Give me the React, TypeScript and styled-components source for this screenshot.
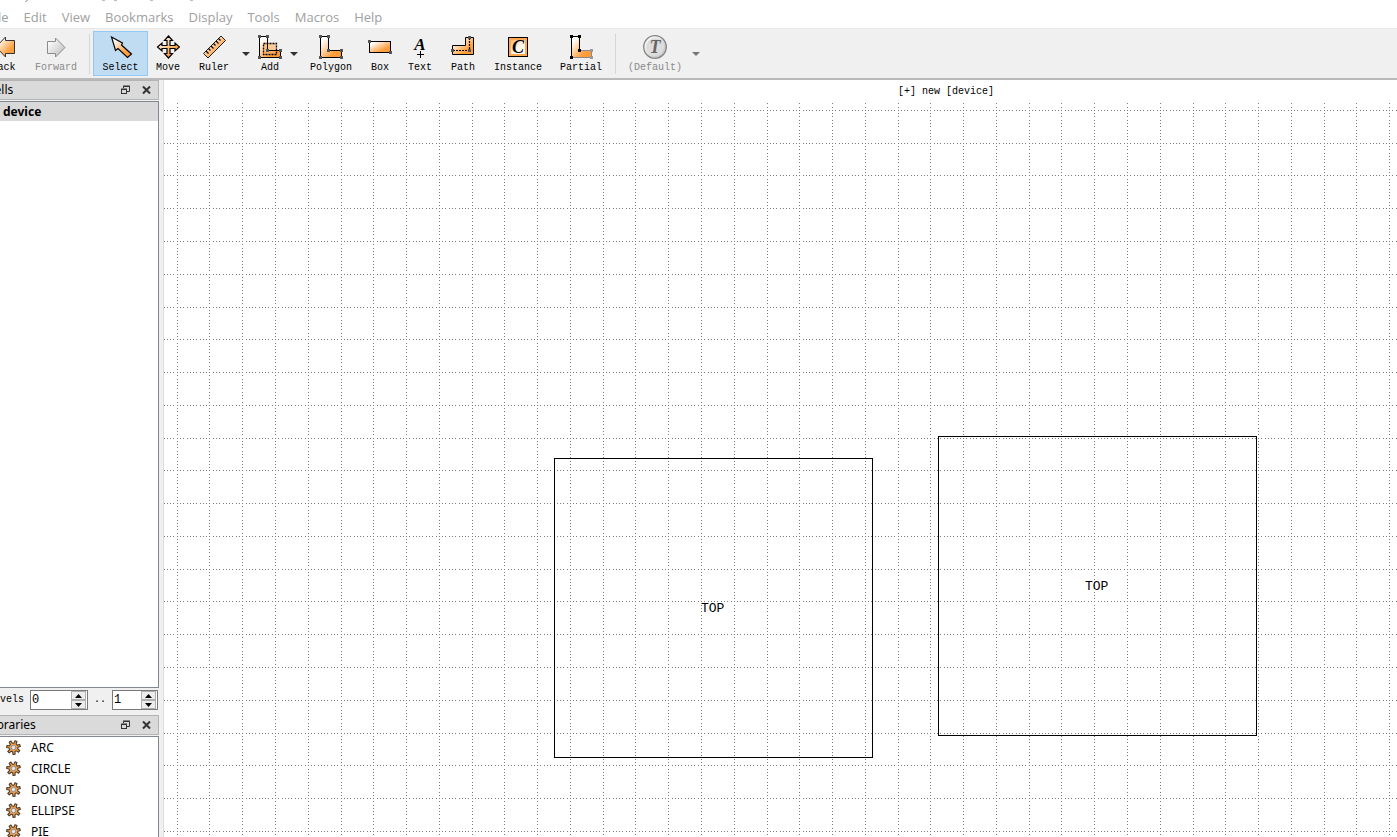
import React from "react";
import styled, { createGlobalStyle, css } from "styled-components";

const GlobalStyle = createGlobalStyle`
  * { box-sizing: border-box; }
  body { margin: 0; overflow: hidden; background: #fff; }
  button, input { font: inherit; color: inherit; margin: 0; }
`;

const mono = `"Liberation Mono", monospace`;
const sans = `"Noto Sans", sans-serif`;

/* The window hangs off the left edge of the screen. */
const Window = styled.div`
  margin-left: -20px;
  height: 100vh;
  display: flex;
  flex-direction: column;
  background: #f0f0f0;
  font: 12px/16px ${sans};
  color: #000;
`;

const TitleBar = styled.div`
  height: 7px;
  flex: none;
  background: #fff;
  svg { display: block; }
`;

const MenuBar = styled.nav`
  flex: none;
  display: flex;
  height: 21px;
  padding-left: 8px;
  gap: 15px;
  background: #fff;
`;

const MenuItem = styled.button`
  border: 0;
  padding: 0;
  background: none;
  font-family: "Open Sans", sans-serif;
  font-size: 13px;
  line-height: 20px;
  height: 20px;
  color: #a0a0a0;
`;

const Toolbar = styled.div`
  flex: none;
  display: flex;
  align-items: center;
  height: 52px;
  padding: 2px 0 2px 0;
  border-top: 1px solid #e8e8e8;
  border-bottom: 2px solid #b9b9b9;
`;

const ToolButton = styled.button<{ $w: number; $active?: boolean }>`
  flex: none;
  width: ${(p) => p.$w}px;
  height: 45px;
  padding: 3px 0 0;
  display: flex;
  flex-direction: column;
  align-items: center;
  gap: 2px;
  border: 1px solid transparent;
  background: none;
  font: 10px/14px ${mono};
  color: #000;
  white-space: nowrap;
  &:disabled { color: #8a8a8a; }
  ${(p) => p.$active && css`background: #c0dcf3; border-color: #90c8f6;`}
`;

const DropButton = styled.button`
  flex: none;
  width: 12px;
  height: 45px;
  padding: 0;
  border: 0;
  background: none;
  color: #303030;
  &:disabled { color: #777; }
  svg { display: block; margin: 0 auto; }
`;

const Separator = styled.div<{ $m: string }>`
  flex: none;
  width: 1px;
  height: 40px;
  margin: ${(p) => p.$m};
  background: #d5d5d5;
`;

const Main = styled.div`
  flex: 1;
  min-height: 0;
  display: flex;
`;

const Sidebar = styled.aside`
  flex: none;
  width: 179px;
  display: flex;
  flex-direction: column;
`;

const PanelHeader = styled.header`
  flex: none;
  display: flex;
  align-items: center;
  height: 20px;
  padding: 0 6px;
  gap: 9px;
  border: 1px solid #b4b4b4;
  background: #dadada;
  h2 { flex: 1; margin: 0; font-size: 12px; line-height: 18px; font-weight: 400; }
`;

const HeaderButton = styled.button`
  width: 12px;
  height: 12px;
  padding: 0;
  border: 0;
  background: none;
  svg { display: block; }
`;

const CellList = styled.ul`
  flex: 1;
  margin: 1px 0 0;
  padding: 0;
  list-style: none;
  border: 1px solid #828790;
  background: #fff;
`;

const CellRow = styled.li`
  height: 19px;
  padding-left: 22px;
  background: #d9d9d9;
  font-weight: 700;
  line-height: 19px;
`;

const LevelRow = styled.div`
  flex: none;
  display: flex;
  align-items: center;
  height: 27px;
  padding: 0 1px 3px 8px;
  font: 10px/14px ${mono};
`;

const LevelLabel = styled.label`
  width: 42px;
`;

const Dots = styled.span`
  width: 24px;
  text-align: center;
`;

const Spin = styled.div<{ $w: number }>`
  display: flex;
  width: ${(p) => p.$w}px;
  height: 20px;
  padding-right: 1px;
  border: 1px solid #7a7a7a;
  background: #fff;
  input {
    flex: 1;
    min-width: 0;
    border: 0;
    padding: 0 0 0 1px;
    background: none;
    font-size: 12px;
    outline: 0;
  }
`;

const Steps = styled.div`
  width: 15px;
  display: flex;
  flex-direction: column;
  button {
    flex: 1;
    padding: 0;
    border: 1px solid #b0b0b0;
    background: #ececec;
    line-height: 0;
  }
  svg { display: block; margin: 0 auto; }
`;

const LibraryList = styled.ul`
  flex: none;
  height: 101px;
  margin: 1px 0 0;
  padding: 0;
  overflow: hidden;
  list-style: none;
  border: 1px solid #828790;
  border-bottom: 0;
  background: #fff;
`;

const LibraryRow = styled.li`
  display: flex;
  align-items: center;
  gap: 10px;
  height: 21px;
  padding-left: 25px;
`;

const View = styled.main`
  flex: 1;
  min-width: 0;
  margin-left: 4px;
  display: flex;
  flex-direction: column;
  border-left: 1px solid #ddd;
  background: #fff;
`;

const ViewTitle = styled.div`
  flex: none;
  height: 23px;
  padding-left: 734px;
  font: 10px/24px ${mono};
  white-space: pre;
`;

const Layout = styled.svg`
  flex: 1;
  min-height: 0;
  width: 100%;
  display: block;
  overflow: hidden;
`;

/* ---------- icons ---------- */

const Icon = ({ children }: { children: React.ReactNode }) => (
  <svg width="24" height="24" viewBox="0 0 24 24" fill="none" aria-hidden="true">{children}</svg>
);

const GradientDefs = styled.svg`
  position: absolute;
`;

const Gradients = () => (
  <GradientDefs width="0" height="0" aria-hidden="true">
    <defs>
      <linearGradient id="warm" x1="0" y1="0" x2="1" y2="1">
        <stop offset="0.15" stopColor="#fff" />
        <stop offset="0.7" stopColor="#ffa040" />
        <stop offset="1" stopColor="#ff9530" />
      </linearGradient>
      <linearGradient id="grey" x1="0" y1="0" x2="1" y2="1">
        <stop offset="0.1" stopColor="#fff" />
        <stop offset="1" stopColor="#b8b8b8" />
      </linearGradient>
      <linearGradient id="paper" x1="0" y1="0" x2="1" y2="1">
        <stop offset="0" stopColor="#ffb060" />
        <stop offset="0.5" stopColor="#fff4e8" />
        <stop offset="1" stopColor="#fff" />
      </linearGradient>
    </defs>
  </GradientDefs>
);

const Nodes = ({ at, fill = "#555" }: { at: number[][]; fill?: string }) => (
  <>{at.map(([x, y]) => <rect key={x + "," + y} x={x - 1.5} y={y - 1.5} width="3" height="3" fill={fill} />)}</>
);

const BackIcon = () => <Icon><path d="M22.5 5.5V18.5H13.5V22L4 12L13.5 2V5.5Z" fill="url(#warm)" stroke="#333" /></Icon>;
const ForwardIcon = () => <Icon><path d="M3.5 6.5V18.5H11.5V22L21 12.500L11.5 3V6.5Z" fill="url(#grey)" stroke="#8c8c8c" /></Icon>;
const SelectIcon = () => <Icon><path d="M2.5 2L13.500 8L12.500 10L22.500 19L18.500 22.500L9 13.500L6.500 15.500Z" fill="url(#warm)" stroke="#000" strokeWidth="1.200" /></Icon>;
const MoveIcon = () => (
  <Icon><path d="M12.500 1L16.500 5.500H14V10.500H19V8L23.500 12L19 16V13.500H14V18.500H16.500L12.500 23L8.500 18.500H11V13.500H6V16L1.500 12L6 8V10.500H11V5.500H8.500Z" fill="url(#warm)" stroke="#000" strokeWidth="1.200" /></Icon>
);
const RulerIcon = () => (
  <Icon>
    <path d="M1.500 18.500L19 1L23.500 5.500L6 23Z" fill="url(#warm)" stroke="#222" />
    <path d="M4 16L6.500 18.500M6.500 13.500L8.500 15.500M9 11L11.500 13.500M11.500 8.500L13.500 10.500M14 6L16.500 8.500M16.500 3.500L18.500 5.500" stroke="#000" strokeWidth="1.200" />
  </Icon>
);
const ell = (l: number, m: number) => [[l, 1.5], [m, 1.5], [m, 15.5], [22.5, 15.5], [22.5, 22.5], [l, 22.5]];
const AddIcon = () => (
  <Icon>
    <path d="M1.500 1.500H9.500V15.500H22.500V22.500H1.500Z" fill="url(#warm)" stroke="#000" />
    <rect x="5.500" y="8.500" width="13" height="11" fill="#ffb060" fillOpacity="0.600" stroke="#000" strokeDasharray="2 1" strokeWidth="1.300" />
    <path d="M9.500 8V15.500H19" stroke="#000" />
    <Nodes at={ell(1.5, 9.5)} />
  </Icon>
);
const PolygonIcon = () => (
  <Icon>
    <path d="M1.500 1.500H9.500V15.500H22.500V22.500H1.500Z" fill="url(#warm)" stroke="#000" />
    <Nodes at={ell(1.5, 9.5)} />
  </Icon>
);
const BoxIcon = () => (
  <Icon>
    <rect x="1.500" y="6.500" width="21" height="11" fill="url(#warm)" stroke="#000" />
    <Nodes at={[[1.5, 6.5], [22.5, 17.5]]} />
  </Icon>
);
const IconGlyph = styled.text`
  font-family: "Liberation Serif", serif;
  font-weight: 700;
  font-style: italic;
  text-anchor: middle;
`;
const TextIcon = () => (
  <Icon>
    <IconGlyph x="12" y="15" fontSize="17" fill="#000">A</IconGlyph>
    <path d="M12.500 16V23M9 19.500H16" stroke="#000" />
  </Icon>
);
const PathIcon = () => (
  <Icon>
    <path d="M1.500 10.500H14.500V2.500H22.500V19.500H1.500Z" fill="url(#warm)" stroke="#000" />
    <path d="M2 15.500H18.500V2" stroke="#000" strokeDasharray="2 1" strokeWidth="1.200" />
    <Nodes at={[[1.5, 15.5], [18.5, 15.5], [18.5, 2.5]]} />
  </Icon>
);
const InstanceIcon = () => (
  <Icon>
    <rect x="2.500" y="2.500" width="19" height="19" fill="#ffa850" stroke="#000" />
    <rect x="5" y="5" width="14" height="14" fill="url(#paper)" />
    <IconGlyph x="12" y="18" fontSize="18" fill="#000">C</IconGlyph>
  </Icon>
);
const PartialIcon = () => (
  <Icon>
    <path d="M2.500 1.500H10.500V15.500H22.500V22.500H2.500Z" fill="url(#warm)" stroke="#888" />
    <path d="M2.500 22.500V1.500H10.500V15.500" stroke="#000" />
    <Nodes at={[[22.5, 15.5], [22.5, 22.5]]} fill="#999" />
    <Nodes at={[[2.5, 1.5], [10.5, 1.5], [10.5, 15.5], [2.5, 22.5]]} fill="#000" />
  </Icon>
);
const DefaultIcon = () => (
  <Icon>
    <circle cx="12" cy="12" r="11.300" fill="url(#grey)" stroke="#858585" strokeWidth="1.300" />
    <circle cx="12" cy="12" r="9" fill="#ddd" />
    <IconGlyph x="12" y="18" fontSize="18" fill="#666">T</IconGlyph>
  </Icon>
);
const DropArrow = () => <svg width="8" height="4" viewBox="0 0 8 4"><path d="M0 0H8L4 4Z" fill="currentColor" /></svg>;

const FloatIcon = () => (
  <svg width="12" height="12" viewBox="0 0 12 12" fill="none" stroke="#333">
    <path d="M4.500 4V2.500H10.500V7.500H8" /><path d="M4 2H11" />
    <rect x="2.500" y="5.500" width="5" height="4" /><path d="M2 5H8" />
  </svg>
);
const CloseIcon = () => (
  <svg width="12" height="12" viewBox="0 0 12 12" fill="none" stroke="#333" strokeWidth="2"><path d="M3 2.500L10 9.500M10 2.500L3 9.500" /></svg>
);

const gearPath = (() => {
  const pts: string[] = [];
  const teeth = 7;
  for (let i = 0; i < teeth; i++) {
    [[-0.3, 4.4], [-0.17, 6.9], [0.17, 6.9], [0.3, 4.4]].forEach(([o, r]) => {
      const a = ((i + o) / teeth) * Math.PI * 2 - 1.2;
      pts.push(`${(7.5 + r * Math.cos(a)).toFixed(2)} ${(7.5 + r * Math.sin(a)).toFixed(2)}`);
    });
  }
  return `M${pts.join("L")}Z`;
})();
const GearIcon = () => (
  <svg width="15" height="15" viewBox="0 0 15 15" aria-hidden="true">
    <path d={gearPath} fill="#f2a04c" stroke="#4a3a2c" strokeWidth="1.100" strokeLinejoin="round" />
    <circle cx="7.500" cy="7.500" r="2.200" fill="#e8e8e8" stroke="#8a8a8a" />
  </svg>
);

/* ---------- layout view ---------- */

/* Grid pitch in screen pixels; each cell holds ten dots. */
const PITCH = 32.77;
const X0 = 12.7;
const Y0 = 6.9;
const EXTENT_X = 2600;
const EXTENT_Y = 1600;

const dots = (origin: number, extent: number, make: (p: number) => string) => {
  let d = "";
  for (let k = -4; origin + (k * PITCH) / 10 < extent; k++) {
    const p = Math.round(origin + (k * PITCH) / 10);
    if (p >= 0) d += make(p);
  }
  return d;
};
const rowDots = dots(X0, EXTENT_X, (x) => `M${x} 0h1v1h-1z`);
const colDots = dots(Y0, EXTENT_Y, (y) => `M0 ${y}h1v1h-1z`);
const steps = (origin: number, extent: number) =>
  Array.from({ length: Math.floor(extent / PITCH) }, (_, i) => Math.round(origin + i * PITCH));

const instances = [
  { x: 390, y: 355, label: "TOP" },
  { x: 774, y: 333, label: "TOP" },
];

const InstanceLabel = styled.text`
  font: 13px ${mono};
  fill: #000;
`;

const LayoutCanvas = () => (
  <Layout role="img" aria-label="Layout of cell device">
    <defs>
      <path id="row" d={rowDots} fill="#7c7c7c" />
      <path id="col" d={colDots} fill="#7c7c7c" />
    </defs>
    {steps(Y0, EXTENT_Y).map((y) => <use key={y} href="#row" y={y} />)}
    {steps(X0, EXTENT_X).map((x) => <use key={x} href="#col" x={x} />)}
    {instances.map(({ x, y, label }) => (
      <g key={x}>
        <rect x={x + 0.5} y={y + 0.5} width="318" height="299" fill="none" stroke="#000" />
        <InstanceLabel x={x + 147} y={y + 154}>{label}</InstanceLabel>
      </g>
    ))}
  </Layout>
);

/* ---------- page ---------- */

const SpinBox = ({ id, value, w, label }: { id: string; value: string; w: number; label: string }) => (
  <Spin $w={w}>
    <input id={id} defaultValue={value} aria-label={label} />
    <Steps>
      <button aria-label="Increase"><svg width="7" height="4" viewBox="0 0 7 4"><path d="M0 4L3.500 0L7 4Z" /></svg></button>
      <button aria-label="Decrease"><svg width="7" height="4" viewBox="0 0 7 4"><path d="M0 0L3.500 4L7 0Z" /></svg></button>
    </Steps>
  </Spin>
);

const PanelButtons = () => (
  <>
    <HeaderButton aria-label="Float"><FloatIcon /></HeaderButton>
    <HeaderButton aria-label="Close"><CloseIcon /></HeaderButton>
  </>
);

const menus = ["File", "Edit", "View", "Bookmarks", "Display", "Tools", "Macros", "Help"];
const libraries = ["ARC", "CIRCLE", "DONUT", "ELLIPSE", "PIE"];

export default function App() {
  return (
    <>
      <GlobalStyle />
      <Gradients />
      <Window>
        <TitleBar>
          <svg width="240" height="2" fill="#c4b8b2" aria-hidden="true">
            <path d="M45 1h2v1h-2zM46 0h2v1h-2zM122 0h3v1h-3zM134 0h3v1h-3zM170 0h3v1h-3zM210 0h3v1h-3z" />
          </svg>
        </TitleBar>
        <MenuBar>
          {menus.map((m) => <MenuItem key={m}>{m}</MenuItem>)}
        </MenuBar>
        <Toolbar>
          <ToolButton $w={47}><BackIcon />Back</ToolButton>
          <ToolButton $w={58} disabled><ForwardIcon />Forward</ToolButton>
          <Separator $m="0 3px 0 4px" />
          <ToolButton $w={55} $active><SelectIcon />Select</ToolButton>
          <ToolButton $w={40}><MoveIcon />Move</ToolButton>
          <ToolButton $w={52}><RulerIcon />Ruler</ToolButton>
          <DropButton aria-label="Ruler templates"><DropArrow /></DropButton>
          <ToolButton $w={36}><AddIcon />Add</ToolButton>
          <DropButton aria-label="Combine modes"><DropArrow /></DropButton>
          <ToolButton $w={62}><PolygonIcon />Polygon</ToolButton>
          <ToolButton $w={36}><BoxIcon />Box</ToolButton>
          <ToolButton $w={44}><TextIcon />Text</ToolButton>
          <ToolButton $w={42}><PathIcon />Path</ToolButton>
          <ToolButton $w={68}><InstanceIcon />Instance</ToolButton>
          <ToolButton $w={58}><PartialIcon />Partial</ToolButton>
          <Separator $m="0 4px 0 5px" />
          <ToolButton $w={70} disabled><DefaultIcon />(Default)</ToolButton>
          <DropButton aria-label="Technologies" disabled><DropArrow /></DropButton>
        </Toolbar>
        <Main>
          <Sidebar>
            <PanelHeader><h2>Cells</h2><PanelButtons /></PanelHeader>
            <CellList><CellRow>device</CellRow></CellList>
            <LevelRow>
              <LevelLabel htmlFor="from">Levels</LevelLabel>
              <SpinBox id="from" value="0" w={58} label="Levels from" />
              <Dots>..</Dots>
              <SpinBox id="to" value="1" w={46} label="Levels to" />
            </LevelRow>
            <PanelHeader><h2>Libraries</h2><PanelButtons /></PanelHeader>
            <LibraryList>
              {libraries.map((l) => <LibraryRow key={l}><GearIcon />{l}</LibraryRow>)}
            </LibraryList>
          </Sidebar>
          <View>
            <ViewTitle>[+] new [device]</ViewTitle>
            <LayoutCanvas />
          </View>
        </Main>
      </Window>
    </>
  );
}
